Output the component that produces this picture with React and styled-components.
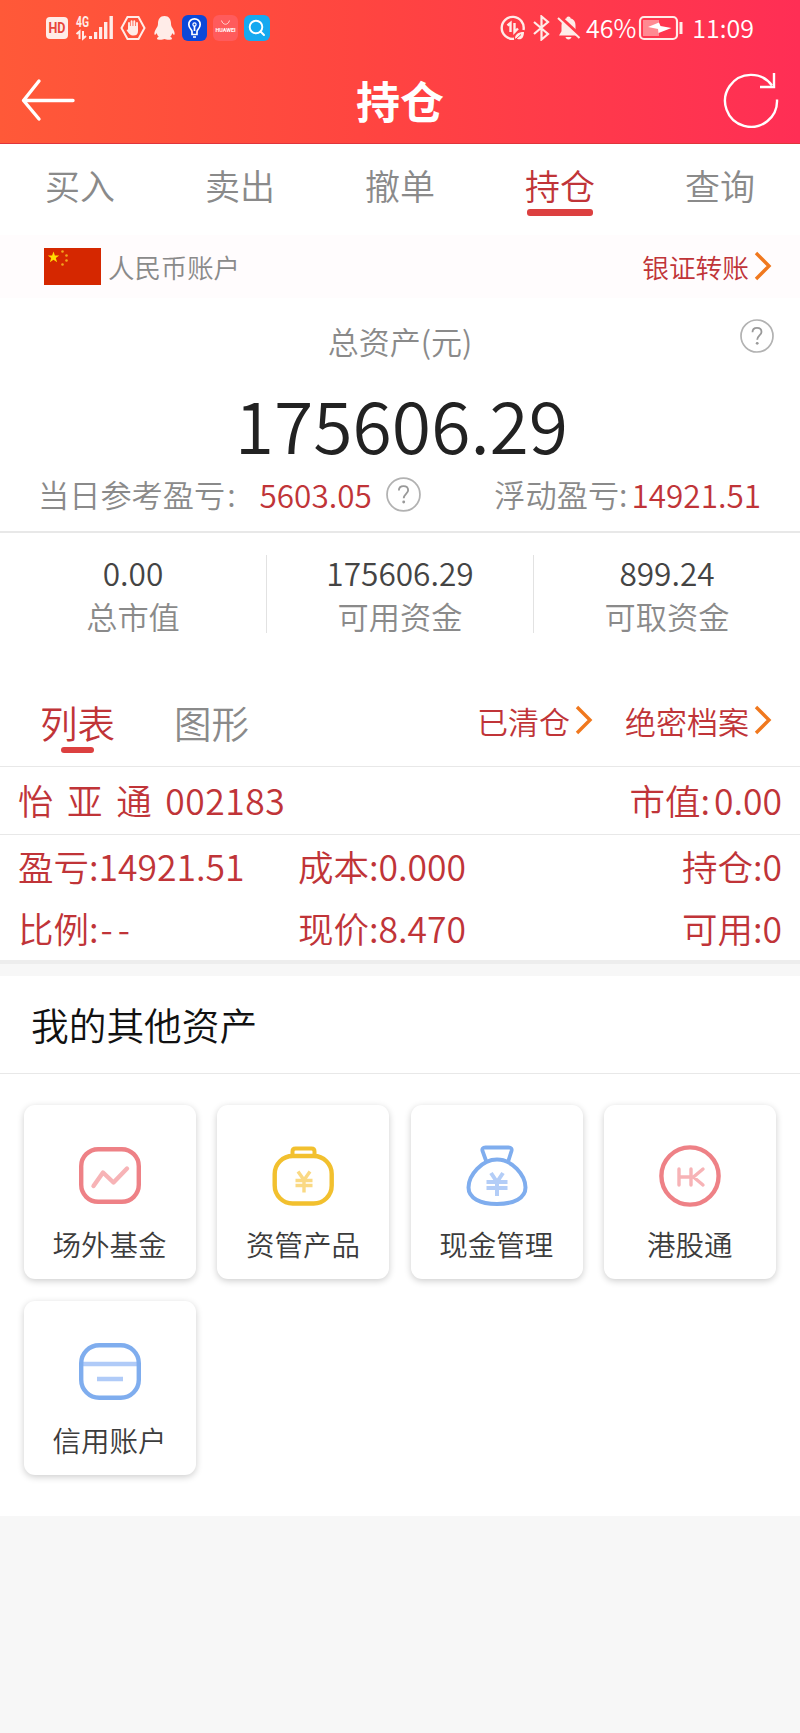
import React from "react"
import styled, { createGlobalStyle } from "styled-components"

const GlobalStyle = createGlobalStyle`
  * {
    box-sizing: border-box;
  }

  body {
    margin: 0;
    background: #f7f7f7;
    font-family: "Noto Sans CJK SC", "Noto Sans", sans-serif;
    font-weight: 350;
    color: #333;
  }
`

const red = "#c03438"
const grey = "#8a8a8a"
const line = "#e8e8e8"

const Page = styled.div`
  width: 800px;
  min-height: 1733px;
  background: #f7f7f7;
`

/* header */

const Header = styled.header`
  height: 144px;
  background: linear-gradient(90deg, #ff5938 0%, #ff4540 45%, #ff2e55 100%);
  border-bottom: 1px solid #e0353c;
  color: #fff;
`

const StatusBar = styled.div`
  height: 56px;
  padding: 0 46px 0 45px;
  display: flex;
  align-items: center;
  justify-content: space-between;
`

const StatusGroup = styled.div`
  display: flex;
  align-items: center;
  gap: ${({ gap }) => gap}px;

  svg {
    display: block;
  }
`

const StatusText = styled.span`
  font-size: 25px;
  line-height: 26px;
  margin-left: ${({ left }) => left || 0}px;
  letter-spacing: ${({ spacing }) => spacing || 0}px;
  padding-bottom: 2px;
`

const TitleBar = styled.div`
  height: 88px;
  padding: 0 21px;
  display: grid;
  grid-template-columns: 56px 1fr 56px;
  align-items: center;

  svg {
    display: block;
  }
`

const RefreshButton = styled.a`
  margin-left: -1px;
  padding-bottom: 2px;
`

const Title = styled.h1`
  margin: 0;
  font-size: 44px;
  line-height: 84px;
  font-weight: 700;
  text-align: center;
`

/* top tabs */

const Tabs = styled.nav`
  height: 91px;
  padding-top: 18px;
  display: grid;
  grid-template-columns: repeat(5, 1fr);
  justify-items: center;
  background: #fff;
`

const Tab = styled.a`
  font-size: 35px;
  line-height: 46px;
  height: 54px;
  color: ${({ $active }) => ($active ? red : grey)};

  &::after {
    content: "";
    display: block;
    width: 66px;
    height: 7px;
    margin: 1px auto 0;
    border-radius: 3px;
    background: ${({ $active }) => ($active ? "#dc4040" : "transparent")};
  }
`

const AccountRow = styled.div`
  height: 63px;
  padding: 0 28px 0 44px;
  display: flex;
  align-items: center;
  background: #fffcfd;

  svg {
    display: block;
  }
`

const AccountName = styled.span`
  margin-left: 7px;
  flex: 1;
  font-size: 26.4px;
  line-height: 36px;
  color: ${grey};
`

const MoreLink = styled.a`
  display: flex;
  align-items: center;
  font-size: ${({ size }) => size}px;
  line-height: 40px;
  color: ${red};

  svg {
    margin: 0 0 2px 5px;
  }
`

/* totals */

const Summary = styled.section`
  height: 235px;
  padding-top: 22px;
  background: #fff;
  border-bottom: 2px solid ${line};
`

const SummaryHead = styled.div`
  height: 42px;
  padding: 0 26px;
  display: grid;
  grid-template-columns: 34px 1fr 34px;
  align-items: center;

  svg {
    display: block;
    margin-top: -10px;
  }
`

const SummaryLabel = styled.div`
  text-align: center;
  font-size: 31px;
  line-height: 42px;
  color: ${grey};
`

const Total = styled.div`
  height: 74px;
  margin-top: 24px;
  padding-left: 3px;
  overflow: hidden;
  font-size: 71.5px;
  line-height: 74px;
  text-align: center;
  color: #222;
`

const ProfitRow = styled.div`
  height: 40px;
  margin-top: 14px;
  padding: 0 39px 0 38px;
  display: flex;
  align-items: center;
  font-size: 31.2px;
  line-height: 40px;
`

const ProfitLabel = styled.span`
  color: ${grey};
`

const ProfitValue = styled.span`
  color: ${red};
  font-size: 31.5px;
  margin: 0 ${({ right }) => right || 0}px 0 ${({ left }) => left || 0}px;
`

const Colon = styled.span`
  margin-left: 2px;
`

const Spacer = styled.div`
  flex: 1;
`

const Funds = styled.section`
  height: 148px;
  padding-top: 22px;
  background: #fff;
  display: grid;
  grid-template-columns: 267px 267px 266px;
`

const Fund = styled.div`
  height: 78px;
  text-align: center;
  font-size: 31.2px;
  border-right: 1px solid #e2e2e2;

  &:last-child {
    border-right: none;
  }
`

const FundValue = styled.div`
  padding-top: 1px;
  font-size: 31.6px;
  line-height: 32px;
  color: #444;
`

const FundLabel = styled.div`
  margin-top: 12px;
  line-height: 32px;
  color: ${grey};
`

/* holdings */

const ListHead = styled.div`
  height: 86px;
  padding: 16px 28px 0 40px;
  display: flex;
  background: #fff;
  border-bottom: 1px solid ${line};
`

const ListTab = styled.a`
  height: 60px;
  margin-right: 59px;
  font-size: 37.5px;
  line-height: 49px;
  color: ${({ $active }) => ($active ? red : grey)};

  &::after {
    content: "";
    display: block;
    width: 33px;
    height: 6px;
    margin: 1px auto 0;
    border-radius: 3px;
    background: ${({ $active }) => ($active ? "#dc4040" : "transparent")};
  }
`

const ListLinks = styled.div`
  margin-left: auto;
  height: 48px;
  display: flex;
  align-items: center;
  gap: 32px;
`

const Holding = styled.section`
  background: #fff;
  color: ${red};
  font-size: 35.5px;
  line-height: 50px;
`

const HoldingHead = styled.div`
  height: 68px;
  padding: 8px 18px 0;
  display: flex;
  justify-content: space-between;
  word-spacing: 4.7px;
  border-bottom: 1px solid ${line};
`

const HoldingCode = styled.span`
  letter-spacing: 0.5px;
`

const HoldingValue = styled.span`
  margin-left: 4px;
`

const HoldingBody = styled.div`
  height: 125px;
  padding: 6px 18px 0;
  display: grid;
  grid-template-columns: 280px 1fr auto;
  grid-auto-rows: 62px;
`

const HoldingCell = styled.div`
  text-align: ${({ align }) => align || "left"};
`

const Dashes = styled.span`
  letter-spacing: 5px;
  margin-left: 2px;
`

const Divider = styled.div`
  height: 16px;
  background: #f7f7f7;
  border-top: 4px solid #ededed;
`

/* other assets */

const Others = styled.section`
  height: 540px;
  background: #fff;
`

const OthersTitle = styled.h2`
  margin: 0;
  height: 98px;
  padding-left: 31px;
  font-size: 37.7px;
  line-height: 95px;
  font-weight: 350;
  color: #111;
  border-bottom: 1px solid ${line};
`

const CardGrid = styled.div`
  padding: 31px 0 0 24px;
  display: grid;
  grid-template-columns: repeat(4, 172px);
  grid-auto-rows: 174px;
  gap: 22px 21.4px;
`

const Card = styled.div`
  padding-top: 40px;
  display: flex;
  flex-direction: column;
  align-items: center;
  border-radius: 11px;
  background: #fff;
  box-shadow: 0 2px 7px rgba(0, 0, 0, 0.2);
`

const CardLabel = styled.span`
  margin: 17px 1px 0 0;
  font-size: 28.5px;
  line-height: 40px;
  color: #3c3c3c;
`

const Chevron = () => (
  <svg width="18" height="30" viewBox="0 0 18 30" fill="none">
    <path d="M2 2 L15 15 L2 28" stroke="#f0781e" strokeWidth="3.4" />
  </svg>
)

const Help = ({ size = 34 }) => (
  <svg width={size} height={size} viewBox="0 0 34 34" fill="none">
    <circle cx="17" cy="17" r="16" stroke="#b2b2b2" strokeWidth="1.7" />
    <path
      d="M12.500 13.200c0-2.800 1.900-4.400 4.500-4.400s4.500 1.600 4.500 4.100c0 3.300-4.300 3.900-4.300 7.800"
      stroke="#999"
      strokeWidth="1.800"
    />
    <circle cx="17.200" cy="24.300" r="1.400" fill="#999" />
  </svg>
)

const Flag = () => (
  <svg width="57" height="37" viewBox="0 0 57 37">
    <rect width="57" height="37" fill="#d52700" />
    <path
      d="M9.500 3.500l1.400 4h4.300l-3.400 2.600 1.300 4.100-3.600-2.500-3.600 2.500 1.300-4.100-3.400-2.600h4.300z"
      fill="#ffde00"
    />
    <g fill="#f3a51c">
      <circle cx="18.500" cy="3.500" r="1.300" />
      <circle cx="22.500" cy="7.500" r="1.300" />
      <circle cx="22.500" cy="12.500" r="1.300" />
      <circle cx="18.500" cy="16.500" r="1.300" />
    </g>
  </svg>
)

const LeftStatus = () => (
  <StatusGroup gap={5.6}>
    <svg width="24" height="24" viewBox="0 0 24 24">
      <rect x="1" y="1" width="22" height="22" rx="4" fill="#ffece8" />
      <text
        x="12"
        y="17"
        textAnchor="middle"
        fontFamily="Roboto, sans-serif"
        fontSize="14"
        fontWeight="700"
        textLength="17"
        lengthAdjust="spacingAndGlyphs"
        fill="#e8453a"
      >
        HD
      </text>
    </svg>
    <svg width="40" height="26" viewBox="0 0 40 26" fill="#ffece8">
      <text
        x="1"
        y="11.500"
        fontFamily="Roboto, sans-serif"
        fontSize="14"
        fontWeight="700"
        textLength="13"
        lengthAdjust="spacingAndGlyphs"
      >
        4G
      </text>
      <path d="M1.500 19l3-2.500v7.500M8 16v7.500l3-2.500" fill="none" stroke="#ffece8" strokeWidth="2" />
      <rect x="14" y="21" width="3" height="3" />
      <rect x="19" y="17" width="3.200" height="7" />
      <rect x="24" y="12" width="3.200" height="12" />
      <rect x="29" y="7" width="3.400" height="17" />
      <rect x="34.500" y="1" width="3.400" height="23" />
    </svg>
    <svg width="26" height="26" viewBox="0 0 26 26" fill="none">
      <path d="M7.500 2h11L24.500 13l-6 11h-11L1.500 13z" stroke="#ffece8" strokeWidth="2" />
      <path
        d="M9 12V8M11.600 11V6.200M14.300 11V6.200M17 12V8"
        stroke="#ffece8"
        strokeWidth="1.900"
        strokeLinecap="round"
      />
      <path d="M8 11h10v5c0 3-1.500 4.500-4.500 4.500-3.200 0-4.500-1.500-7-5.500l1.500-.6z" fill="#ffece8" />
    </svg>
    <svg width="25" height="26" viewBox="0 0 25 26" fill="#ffece8">
      <path d="M12.500 1C8 1 6 4.500 6 8.500c0 2-.5 3-1.500 4.500-1.700 2.600-2.500 5-2 6.500.4.800 1.500-.2 2.300-1.500.3 1.700 1 2.800 2 3.700-1.500.6-1.800 1.400-1.800 2.300 0 1 6 1 7.500 0 1.500 1 7.500 1 7.500 0 0-.9-.3-1.700-1.800-2.300 1-.9 1.700-2 2-3.700.8 1.300 1.900 2.300 2.300 1.500.5-1.500-.3-3.900-2-6.500-1-1.500-1.500-2.500-1.500-4.500C19 4.500 17 1 12.500 1z" />
    </svg>
    <svg width="25" height="26" viewBox="0 0 25 26" fill="none">
      <rect width="25" height="26" rx="6" fill="#0b48d8" />
      <path
        d="M10 16.500c0-1.800-3.200-3.300-3.200-7a5.700 5.700 0 0 1 11.400 0c0 3.700-3.200 5.200-3.200 7v3h-5zM11 22h3M12.500 16v-5"
        stroke="#fff"
        strokeWidth="1.700"
      />
      <circle cx="12.500" cy="9.500" r="1.600" stroke="#fff" strokeWidth="1.200" />
    </svg>
    <svg width="25" height="26" viewBox="0 0 25 26" fill="none">
      <rect width="25" height="26" rx="6" fill="#ff5b5c" />
      <path d="M8.500 5.500c1.500 5 6.500 5 8 0" stroke="#ffd5d0" strokeWidth="1" />
      <text
        x="12.500"
        y="17"
        textAnchor="middle"
        fontFamily="Roboto, sans-serif"
        fontSize="5.400"
        fontWeight="700"
        fill="#fff"
      >
        HUAWEI
      </text>
    </svg>
    <svg width="26" height="26" viewBox="0 0 26 26" fill="none">
      <rect width="26" height="26" rx="6" fill="#16a9f0" />
      <circle cx="12" cy="12" r="6.300" stroke="#fff" strokeWidth="1.900" />
      <path d="M16.500 16.500l3.500 3.500" stroke="#fff" strokeWidth="2" strokeLinecap="round" />
    </svg>
  </StatusGroup>
)

const RightStatus = () => (
  <StatusGroup gap={0}>
    <svg width="26" height="26" viewBox="0 0 26 26" fill="none" stroke="#ffece8">
      <path d="M23.500 15A11 11 0 1 0 14 23.800" strokeWidth="2.400" />
      <path d="M7.500 10.500L10.500 8v9M14.500 8v9l3.500-3.500" strokeWidth="2.400" />
      <path d="M15 23.500c0-4 3-6.500 9-6.500 0 6-3 8.500-7 6.700z" fill="#ffece8" stroke="none" />
      <path d="M16 24l5-4.500" stroke="#ff3b4a" strokeWidth="1" />
    </svg>
    <svg width="31" height="26" viewBox="0 0 31 26" fill="none">
      <path d="M8 7L22 19l-6.500 5.500v-23L22 7 8 19" stroke="#ffece8" strokeWidth="2.200" />
    </svg>
    <svg width="26" height="26" viewBox="0 0 26 26" fill="none">
      <path
        d="M11.500 1.500c1.300 0 2 .8 2 1.800 3.300 1 5 3.600 5 7v6l2.500 4.200H2l2.500-4.200v-6c0-3.400 1.700-6 5-7 0-1 .7-1.800 2-1.800zM8.500 22h6c-.3 1.500-1.500 2.500-3 2.500s-2.700-1-3-2.500z"
        fill="#ffece8"
      />
      <path d="M2.500 1.500L23 20.500" stroke="#ff3c49" strokeWidth="3.500" />
      <path d="M1 3L22.500 23" stroke="#ffece8" strokeWidth="2" />
    </svg>
    <StatusText left={3}>46%</StatusText>
    <svg width="50" height="26" viewBox="0 0 50 26" fill="none">
      <rect x="4" y="2" width="37" height="22" rx="4" stroke="#ffece8" strokeWidth="2.200" />
      <rect x="7" y="5" width="16" height="16" fill="#ff8a92" />
      <path d="M12 12L23 7.500l1.500 3.500 11 2-13 5-.5-4z" fill="#fff" />
      <path d="M45 7v12" stroke="#ffece8" strokeWidth="3" />
    </svg>
    <StatusText left={6}>11:09</StatusText>
  </StatusGroup>
)

const FundIcon = () => (
  <svg width="62" height="62" viewBox="0 0 62 62" fill="none">
    <rect x="2.200" y="4.200" width="57.600" height="52.600" rx="17" stroke="#ee8186" strokeWidth="4.400" />
    <path
      d="M14.500 41L24 27.500L34.500 37.500L48 23.500"
      stroke="#f7b3b6"
      strokeWidth="4.400"
      strokeLinecap="round"
      strokeLinejoin="round"
    />
  </svg>
)

const ProductIcon = () => (
  <svg width="62" height="62" viewBox="0 0 62 62" fill="none">
    <rect x="2.700" y="11" width="57" height="47.500" rx="18" stroke="#f2c02e" strokeWidth="4.400" />
    <path
      d="M20.500 11V6.500Q20.500 3.500 23.500 3.500H39.500Q42.500 3.500 42.500 6.500V11"
      stroke="#f2c02e"
      strokeWidth="4"
    />
    <path
      d="M26 26.500l6 8.500L38 26.500M23.500 35.500h17M23.500 40.500h17M32 35v12.500"
      stroke="#fad983"
      strokeWidth="3.400"
    />
  </svg>
)

const CashIcon = () => (
  <svg width="62" height="62" viewBox="0 0 62 62" fill="none">
    <path
      d="M31 14.500C16 14.500 2.500 30 2.500 42.500C2.500 53 14 59 31 59S59.500 53 59.500 42.500C59.500 30 46 14.500 31 14.500z"
      stroke="#7fadee"
      strokeWidth="4"
    />
    <path
      d="M20.500 17L16.500 6Q15.500 2.500 19.500 2.500H42.500Q46.500 2.500 45.500 6L42 17"
      stroke="#7fadee"
      strokeWidth="3.800"
    />
    <path
      d="M25 28l6 9 6-9M20.500 37h21M20.500 43h21M31 36v15"
      stroke="#b3cdf7"
      strokeWidth="4"
    />
  </svg>
)

const HkIcon = () => (
  <svg width="62" height="62" viewBox="0 0 62 62" fill="none">
    <circle cx="31" cy="31" r="28.600" stroke="#ee8186" strokeWidth="4.400" />
    <path
      d="M20 24v16M20 32h12M32 24v16M44 24l-9.500 8l9.500 8"
      stroke="#f7b3b6"
      strokeWidth="3.400"
      strokeLinecap="round"
    />
  </svg>
)

const CreditIcon = () => (
  <svg width="62" height="62" viewBox="0 0 62 62" fill="none">
    <path d="M4 23h54M18 38h26" stroke="#b0cbf8" strokeWidth="4.600" />
    <rect x="2.200" y="4.200" width="57.600" height="52.600" rx="18" stroke="#7fadee" strokeWidth="4.400" />
  </svg>
)

const tabs = ["买入", "卖出", "撤单", "持仓", "查询"]

const funds = [
  { value: "0.00", label: "总市值" },
  { value: "175606.29", label: "可用资金" },
  { value: "899.24", label: "可取资金" },
]

const assets = [
  { label: "场外基金", Icon: FundIcon },
  { label: "资管产品", Icon: ProductIcon },
  { label: "现金管理", Icon: CashIcon },
  { label: "港股通", Icon: HkIcon },
  { label: "信用账户", Icon: CreditIcon },
]

const App = () => {
  return (
    <Page>
      <GlobalStyle />
      <Header>
        <StatusBar>
          <LeftStatus />
          <RightStatus />
        </StatusBar>
        <TitleBar>
          <svg width="56" height="44" viewBox="0 0 56 44" fill="none">
            <path
              d="M18 3L2.500 22.500L18 41M2.500 22.500H52"
              stroke="#fff"
              strokeWidth="3.400"
              strokeLinecap="round"
              strokeLinejoin="round"
            />
          </svg>
          <Title>持仓</Title>
          <RefreshButton>
            <svg width="58" height="58" viewBox="0 0 58 58" fill="none" stroke="#fff" strokeWidth="2.400">
              <path d="M55 29.500A26 26 0 1 1 50 15.500" />
              <path d="M52 3V17H38" />
            </svg>
          </RefreshButton>
        </TitleBar>
      </Header>

      <Tabs>
        {tabs.map(name => (
          <Tab key={name} $active={name === "持仓"}>
            {name}
          </Tab>
        ))}
      </Tabs>

      <AccountRow>
        <Flag />
        <AccountName>人民币账户</AccountName>
        <MoreLink size={26.7}>
          银证转账
          <Chevron />
        </MoreLink>
      </AccountRow>

      <Summary>
        <SummaryHead>
          <span />
          <SummaryLabel>总资产(元)</SummaryLabel>
          <Help />
        </SummaryHead>
        <Total>175606.29</Total>
        <ProfitRow>
          <ProfitLabel>
            当日参考盈亏<Colon>:</Colon>
          </ProfitLabel>
          <ProfitValue left={24} right={14}>
            5603.05
          </ProfitValue>
          <Help size={35} />
          <Spacer />
          <ProfitLabel>浮动盈亏:</ProfitLabel>
          <ProfitValue left={4}>14921.51</ProfitValue>
        </ProfitRow>
      </Summary>

      <Funds>
        {funds.map(({ value, label }) => (
          <Fund key={label}>
            <FundValue>{value}</FundValue>
            <FundLabel>{label}</FundLabel>
          </Fund>
        ))}
      </Funds>

      <ListHead>
        <ListTab $active>列表</ListTab>
        <ListTab>图形</ListTab>
        <ListLinks>
          <MoreLink size={31}>
            已清仓
            <Chevron />
          </MoreLink>
          <MoreLink size={31}>
            绝密档案
            <Chevron />
          </MoreLink>
        </ListLinks>
      </ListHead>

      <Holding>
        <HoldingHead>
          <HoldingCode>怡 亚 通 002183</HoldingCode>
          <span>
            市值:<HoldingValue>0.00</HoldingValue>
          </span>
        </HoldingHead>
        <HoldingBody>
          <HoldingCell>盈亏:14921.51</HoldingCell>
          <HoldingCell>成本:0.000</HoldingCell>
          <HoldingCell align="right">持仓:0</HoldingCell>
          <HoldingCell>
            比例:<Dashes>--</Dashes>
          </HoldingCell>
          <HoldingCell>现价:8.470</HoldingCell>
          <HoldingCell align="right">可用:0</HoldingCell>
        </HoldingBody>
      </Holding>

      <Divider />

      <Others>
        <OthersTitle>我的其他资产</OthersTitle>
        <CardGrid>
          {assets.map(({ label, Icon }) => (
            <Card key={label}>
              <Icon />
              <CardLabel>{label}</CardLabel>
            </Card>
          ))}
        </CardGrid>
      </Others>
    </Page>
  )
}

export default App
